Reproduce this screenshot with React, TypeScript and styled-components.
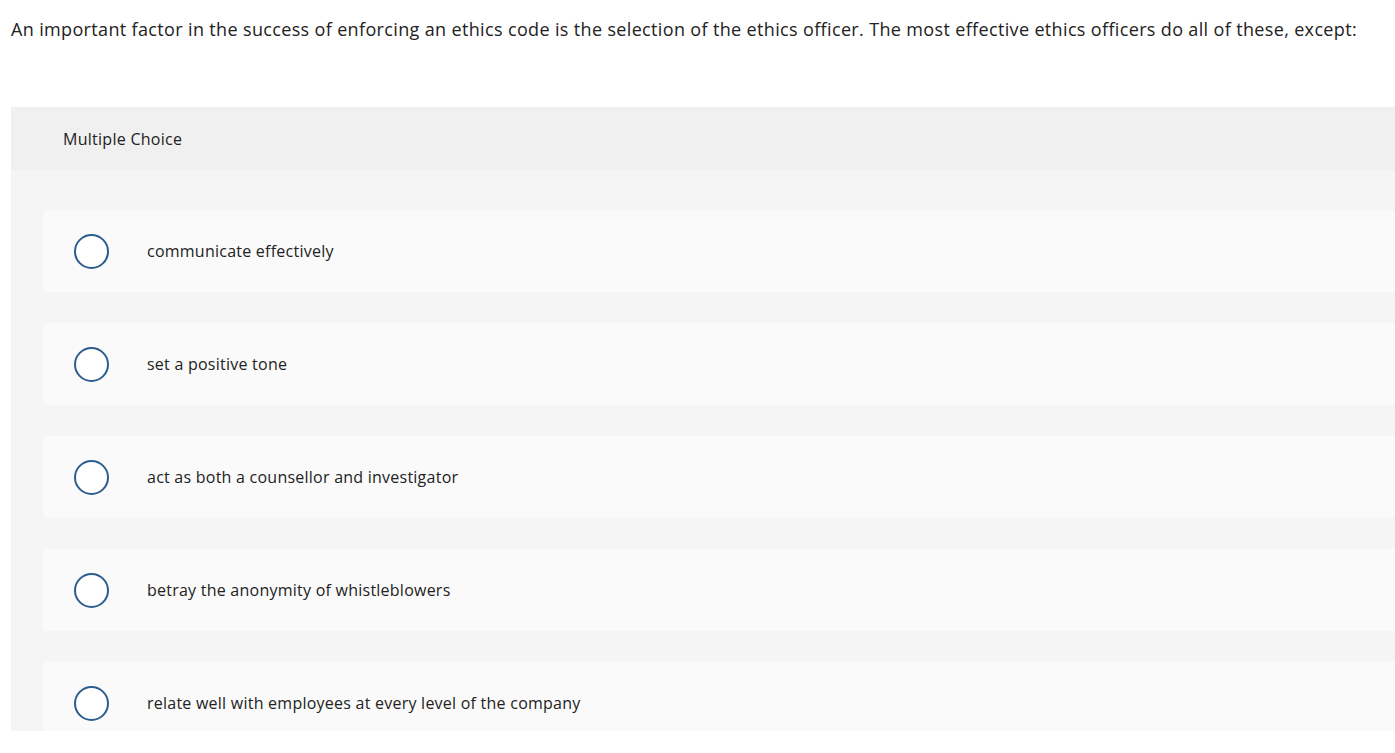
import React from "react";
import styled, { createGlobalStyle } from "styled-components";

const Global = createGlobalStyle`
  html, body { margin: 0; padding: 0; background: #ffffff; }
  body { font-family: "Open Sans", Lato, Arial, sans-serif; color: #1f1f1f; }
`;

const Page = styled.div`
  padding: 17px 0 0 11px;
  height: 731px;
  box-sizing: border-box;
  overflow: hidden;
  display: flex;
  flex-direction: column;
`;

const Question = styled.p`
  margin: 0;
  font-size: 18px;
  line-height: 24px;
  letter-spacing: 0.35px;
  color: #222222;
  white-space: nowrap;
`;

const Panel = styled.section`
  margin-top: 66px;
  flex: 1;
  display: flex;
  flex-direction: column;
  background: #f5f5f5;
  min-height: 0;
`;

const PanelHeader = styled.div`
  height: 63px;
  flex-shrink: 0;
  background: #f0f0f0;
  display: flex;
  align-items: center;
  padding-left: 52px;
  font-size: 16px;
  letter-spacing: 0.27px;
  color: #222222;
`;

const Options = styled.ul`
  list-style: none;
  margin: 0;
  padding: 40px 0 0 32px;
  display: flex;
  flex-direction: column;
  gap: 31px;
`;

const Option = styled.li`
  height: 82px;
  flex-shrink: 0;
  background: #fafafa;
  border-radius: 4px 0 0 4px;
  display: flex;
  align-items: center;
  padding-left: 31px;
  cursor: pointer;
`;

const Radio = styled.span`
  width: 35px;
  height: 35px;
  box-sizing: border-box;
  border: 2px solid #2c5d8f;
  border-radius: 50%;
  background: #ffffff;
  flex-shrink: 0;
`;

const Label = styled.span`
  margin-left: 38px;
  font-size: 16px;
  letter-spacing: 0.24px;
  color: #222222;
`;

const choices = [
  "communicate effectively",
  "set a positive tone",
  "act as both a counsellor and investigator",
  "betray the anonymity of whistleblowers",
  "relate well with employees at every level of the company",
];

export default function App() {
  return (
    <>
      <Global />
      <Page>
        <Question>
          An important factor in the success of enforcing an ethics code is the selection of the ethics officer. The most
          effective ethics officers do all of these, except:
        </Question>
        <Panel>
          <PanelHeader>Multiple Choice</PanelHeader>
          <Options>
            {choices.map((c) => (
              <Option key={c}>
                <Radio />
                <Label>{c}</Label>
              </Option>
            ))}
          </Options>
        </Panel>
      </Page>
    </>
  );
}
